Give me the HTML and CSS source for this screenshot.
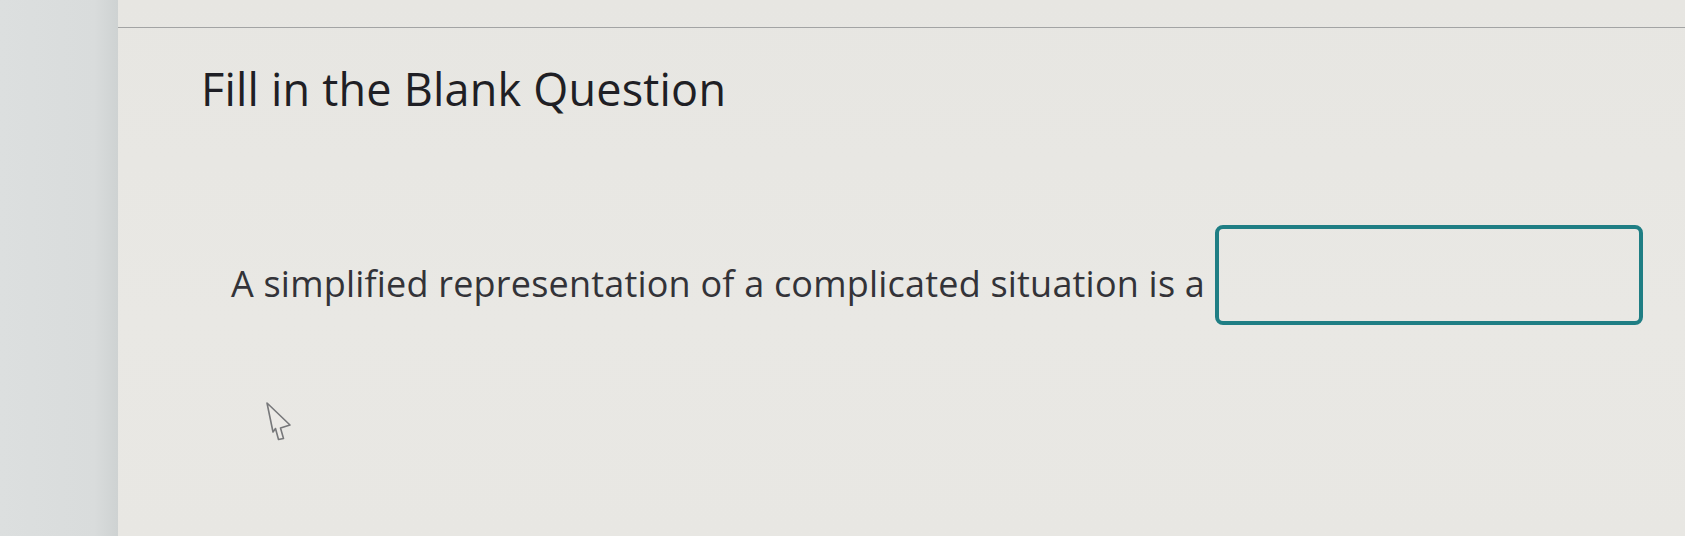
FILE: index.html
```html
<!DOCTYPE html>
<html lang="en">
<head>
<meta charset="utf-8">
<title>Fill in the Blank Question</title>
<link rel="stylesheet" href="styles.css">
</head>
<body>
<div class="page">
  <aside class="sidebar"></aside>
  <main class="content">
    <div class="topbar"></div>
    <section class="question">
      <h1 class="question-title">Fill in the Blank Question</h1>
      <div class="prompt">
        <span class="prompt-text">A simplified representation of a complicated situation is a</span>
        <input class="blank" type="text" aria-label="Answer">
      </div>
    </section>
    <svg class="pointer" width="30" height="42" viewBox="0 0 30 42" aria-hidden="true">
      <path d="M2 2 L8 31 L10.5 27.5 L13.5 38.5 L18.5 37.5 L15.5 27 L25 24 Z" fill="#eceae6" stroke="#77787a" stroke-width="1.6" stroke-linejoin="round"/>
    </svg>
  </main>
</div>
</body>
</html>
```
FILE: styles.css
```css
html, body {
  margin: 0;
  padding: 0;
  height: 100%;
}

body {
  background: #e8e7e3;
  font-family: "Open Sans", "Liberation Sans", sans-serif;
  font-variant-ligatures: none;
  color: #2b2b30;
  overflow: hidden;
}

.page {
  display: flex;
  height: 536px;
}

.sidebar {
  width: 118px;
  flex: none;
  background: linear-gradient(90deg, #dcdfdf 0%, #d9dcdc 80%, #ced2d2 100%);
}

.content {
  flex: 1;
  position: relative;
  background: linear-gradient(180deg, #e7e6e2 0%, #e9e8e4 60%, #e8e7e3 100%);
}

.topbar {
  height: 27px;
  border-bottom: 1px solid #a3a4a4;
}

.question {
  padding: 33px 0 0 83px;
}

.question-title {
  margin: 0;
  font-size: 45px;
  font-weight: 500;
  line-height: 56px;
  letter-spacing: 0.2px;
  color: #1f1f25;
}

.prompt {
  display: flex;
  align-items: flex-end;
  gap: 10px;
  margin-top: 108px;
  padding-left: 30px;
}

.prompt-text {
  font-size: 36px;
  line-height: 44px;
  letter-spacing: 0.2px;
  color: #333338;
  margin-bottom: 19px;
}

.blank {
  width: 428px;
  height: 100px;
  box-sizing: border-box;
  border: 4px solid #1f7e84;
  border-radius: 8px;
  background: transparent;
  outline: none;
  padding: 0 12px;
  font: inherit;
}

.pointer {
  position: absolute;
  left: 147px;
  top: 401px;
}
```
